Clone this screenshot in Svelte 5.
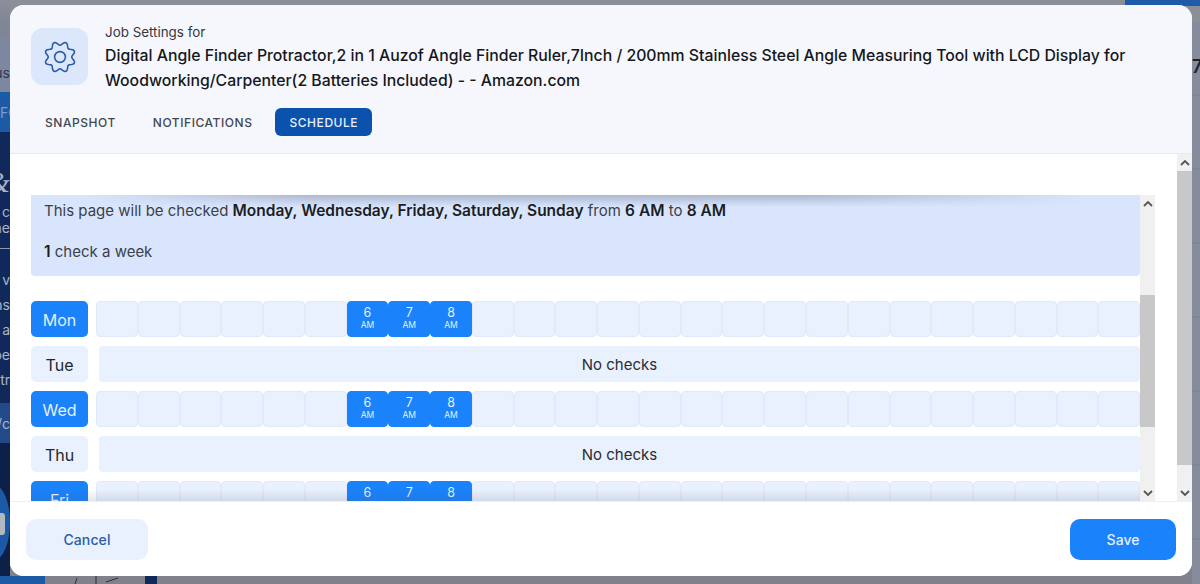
<script>
  const tabs = ['SNAPSHOT', 'NOTIFICATIONS', 'SCHEDULE'];
  let active = $state('SCHEDULE');

  const hours = Array.from({ length: 25 }, (_, i) => i);
  const days = [
    { name: 'Mon', on: true },
    { name: 'Tue', on: false },
    { name: 'Wed', on: true },
    { name: 'Thu', on: false },
    { name: 'Fri', on: true }
  ];
  const picked = [6, 7, 8];

  // eight-lobed cog outline, r swings between the teeth
  const cog = Array.from({ length: 96 }, (_, i) => {
    const a = (i / 96) * Math.PI * 2 + Math.PI / 8;
    const r = 13.6 + 1.9 * Math.cos(a * 8 - Math.PI);
    return `${(16 + r * Math.cos(a)).toFixed(2)} ${(16 + r * Math.sin(a)).toFixed(2)}`;
  });
  const cogPath = 'M' + cog.join('L') + 'Z';
</script>

<div class="page">
  <div class="backdrop">
    <div class="top-blue"></div>
    <div class="left">
      <div class="band b0"></div>
      <div class="band b1"><span>us</span></div>
      <div class="band b2"><span>FO</span></div>
      <div class="band b3">
        <span class="amp">&amp;</span>
        <span class="s1">n c</span>
        <span class="s2">me</span>
        <i class="rule"></i>
        <span class="s3">e v</span>
        <span class="s4">ns</span>
        <span class="s4">t a</span>
        <span class="s4">oe</span>
        <span class="s4">tr</span>
      </div>
      <div class="band b4"><span>y/c</span></div>
      <div class="band b5">
        <i class="head"></i>
        <i class="face"></i>
      </div>
    </div>
    <div class="right">
      <span>7</span>
    </div>
    <div class="bottom">
      <i class="foot-blue"></i>
      <svg width="100" height="8" viewBox="0 0 100 8" fill="none" stroke="#2a2d3a" stroke-width="1">
        <circle cx="-10" cy="8" r="4" fill="#b9bbc2" stroke="none" />
        <path d="M30 8l2-6M51 0v8M61 6l12-4" />
      </svg>
      <i class="foot-navy"></i>
    </div>
  </div>

  <div class="modal">
    <header>
      <div class="top">
        <div class="icon">
          <svg width="32" height="32" viewBox="0 0 32 32" fill="none" stroke="#2a5da8" stroke-width="1.6" stroke-linejoin="round">
            <path d={cogPath} />
            <circle cx="16" cy="16" r="5.4" />
          </svg>
        </div>
        <div class="heading">
          <div class="sub">Job Settings for</div>
          <h1>Digital Angle Finder Protractor,2 in 1 Auzof Angle Finder Ruler,7Inch / 200mm Stainless Steel Angle Measuring Tool with LCD Display for Woodworking/Carpenter(2 Batteries Included) - - Amazon.com</h1>
        </div>
      </div>
      <nav>
        {#each tabs as tab}
          <button type="button" class:active={active === tab} onclick={() => (active = tab)}>{tab}</button>
        {/each}
      </nav>
    </header>

    <div class="body">
      <div class="main">
        <div class="scroller">
          <div class="content">
            <div class="summary">
              <p>This page will be checked <b>Monday, Wednesday, Friday, Saturday, Sunday</b> from <b>6 AM</b> to <b>8 AM</b></p>
              <p><b>1</b> check a week</p>
            </div>
            <div class="rows">
              {#each days as day}
                <div class="row">
                  <div class="day" class:on={day.on}>{day.name}</div>
                  {#if day.on}
                    <div class="cells">
                      {#each hours as h}
                        <div class="cell" class:on={picked.includes(h)}>
                          {#if picked.includes(h)}
                            <span class="num">{h}</span>
                            <span class="ampm">AM</span>
                          {/if}
                        </div>
                      {/each}
                    </div>
                  {:else}
                    <div class="none">No checks</div>
                  {/if}
                </div>
              {/each}
            </div>
          </div>
          <div class="bar inner">
            <div class="arrow"><svg width="10" height="6" viewBox="0 0 10 6"><path d="M1 5l4-4 4 4" fill="none" stroke="#555" stroke-width="1.8" /></svg></div>
            <div class="gap g1"></div>
            <div class="thumb t1"></div>
            <div class="gap g2"></div>
            <div class="arrow"><svg width="10" height="6" viewBox="0 0 10 6"><path d="M1 1l4 4 4-4" fill="none" stroke="#555" stroke-width="1.8" /></svg></div>
          </div>
          <div class="shade top-shade"></div>
          <div class="shade bottom-shade"></div>
        </div>
      </div>
      <div class="bar outer">
        <div class="arrow"><svg width="10" height="6" viewBox="0 0 10 6"><path d="M1 5l4-4 4 4" fill="none" stroke="#555" stroke-width="1.8" /></svg></div>
        <div class="thumb t2"></div>
        <div class="gap g3"></div>
        <div class="arrow"><svg width="10" height="6" viewBox="0 0 10 6"><path d="M1 1l4 4 4-4" fill="none" stroke="#555" stroke-width="1.8" /></svg></div>
      </div>
    </div>

    <footer>
      <button type="button" class="cancel">Cancel</button>
      <button type="button" class="save">Save</button>
    </footer>
  </div>
</div>

<style>
  :global(body) {
    margin: 0;
    overflow: hidden;
    font-family: Inter, "Noto Sans", sans-serif;
  }

  .page {
    position: relative;
    width: 1200px;
    height: 584px;
    box-sizing: border-box;
    padding: 5px 8px 8px 10px;
    overflow: hidden;
    background: linear-gradient(#8b8f98 0, #8b8f98 30px, #80818b 30px);
  }

  /* dimmed page behind the modal */
  .backdrop {
    position: absolute;
    inset: 0;
    overflow: hidden;
  }
  .top-blue {
    position: absolute;
    top: 0;
    right: 0;
    width: 75px;
    height: 6px;
    background: #1f5ba8;
  }
  .left {
    position: absolute;
    left: 0;
    top: 0;
    width: 10px;
    height: 584px;
    display: flex;
    flex-direction: column;
    color: #cfd5e2;
    font-size: 14px;
  }
  .band {
    display: flex;
    flex-direction: column;
    align-items: flex-end;
    overflow: hidden;
    white-space: nowrap;
    position: relative;
  }
  .b0 { height: 37px; background: linear-gradient(#8c8f98, #7f8796 60%, #7f8596); }
  .b1 { height: 55px; background: #7d879f; justify-content: center; color: #2b3a55; padding-top: 16px; box-sizing: border-box; }
  .b2 { height: 40px; background: #1d5aa6; justify-content: center; align-items: flex-start; color: #7f9ccb; }
  .b3 { height: 271px; background: #10295a; padding-top: 30px; box-sizing: border-box; color: #a9b3c9; }
  .b4 { height: 40px; background: #234a88; justify-content: center; color: #a9b5cf; }
  .b5 { flex: 1; background: #0d2047; }
  .amp { font-family: "Liberation Serif", serif; font-style: italic; font-size: 30px; line-height: 40px; }
  .s1 { line-height: 16px; margin-top: 2px; }
  .s2 { line-height: 16px; }
  .rule { width: 10px; height: 1px; background: #8d98b3; margin: 12px 0 18px; flex: none; }
  .s3, .s4 { line-height: 25px; }
  .head {
    position: absolute;
    left: -22px;
    top: 42px;
    width: 32px;
    height: 75px;
    border-radius: 50%;
    background: #1d5aa6;
  }
  .face {
    position: absolute;
    left: -6px;
    top: 70px;
    width: 11px;
    height: 22px;
    border-radius: 3px;
    background: #b4b8c0;
  }
  .right {
    position: absolute;
    left: 1192px;
    top: 22px;
    width: 8px;
    height: 562px;
    background: repeating-linear-gradient(#868c9b 0, #868c9b 72px, #7f8695 72px, #7f8695 74px);
    color: #1d2230;
    font-size: 18px;
    font-weight: 600;
    line-height: 90px;
  }
  .bottom {
    position: absolute;
    left: 0;
    top: 576px;
    width: 100%;
    height: 8px;
    display: flex;
  }
  .foot-blue { width: 45px; background: #1d5aa6; }
  .bottom svg { flex: none; }
  .foot-navy { width: 12px; background: #10295a; }

  .modal {
    position: relative;
    height: 571px;
    display: flex;
    flex-direction: column;
    background: #fff;
    border-radius: 14px;
    overflow: hidden;
  }

  header {
    height: 149px;
    flex: none;
    box-sizing: border-box;
    padding: 17px 21px 0;
    background: #f5f7fc;
    border-bottom: 1px solid #e6e9f0;
  }
  .top {
    display: flex;
    gap: 17px;
  }
  .icon {
    width: 57px;
    height: 57px;
    margin-top: 6px;
    flex: none;
    display: flex;
    align-items: center;
    justify-content: center;
    background: #dce7fb;
    border-radius: 12px;
  }
  .sub {
    font-size: 13.4px;
    line-height: 20px;
    color: #34373f;
  }
  h1 {
    margin: 1px 0 1px;
    font-size: 15.8px;
    line-height: 25px;
    font-weight: 500;
    color: #15171c;
  }
  nav {
    display: flex;
    margin-top: 14px;
  }
  nav button {
    height: 28px;
    padding: 0 14px;
    margin-right: 9px;
    border: 0;
    border-radius: 6px;
    background: none;
    font: 500 12px Inter, sans-serif;
    letter-spacing: 0.55px;
    color: #44474f;
  }
  nav button.active {
    background: #0b52ad;
    color: #e8f0fd;
  }

  .body {
    flex: 1;
    min-height: 0;
    display: flex;
  }
  .main {
    flex: 1;
    min-width: 0;
    padding: 41px 22px 0 21px;
  }
  .scroller {
    position: relative;
    height: 100%;
    display: flex;
    overflow: hidden;
  }
  .content {
    flex: 1;
    min-width: 0;
  }
  .summary {
    height: 81px;
    box-sizing: border-box;
    padding: 5px 13px 0;
    background: #d9e5fc;
    border-radius: 0 0 4px 4px;
    font-size: 15px;
    line-height: 22px;
    color: #3b3f49;
  }
  .summary p {
    margin: 0 0 19px;
  }
  .summary b {
    font-size: 15.5px;
    font-weight: 600;
    color: #1b1d23;
  }
  .rows {
    display: flex;
    flex-direction: column;
    gap: 9px;
    margin-top: 25px;
  }
  .row {
    display: flex;
    height: 36px;
    gap: 8px;
    flex: none;
  }
  .day {
    width: 57px;
    flex: none;
    box-sizing: border-box;
    padding-top: 1px;
    display: flex;
    align-items: center;
    justify-content: center;
    background: #e9f1fe;
    border-radius: 5px;
    font-size: 16px;
    color: #24262c;
  }
  .day.on {
    background: #1a82fb;
    color: #e4efff;
  }
  .cells {
    flex: 1;
    display: flex;
  }
  .cell {
    flex: 1;
    box-sizing: border-box;
    padding-bottom: 1px;
    display: flex;
    flex-direction: column;
    align-items: center;
    justify-content: center;
    background: #e9f1fe;
    border: 1px solid #e2e9f8;
    border-radius: 4px;
    color: #e4efff;
  }
  .cell.on {
    background: #1a82fb;
    border-color: #1a82fb;
  }
  .num {
    font-size: 12.5px;
    line-height: 14px;
  }
  .ampm {
    font-size: 8.5px;
    line-height: 11px;
  }
  .none {
    flex: 1;
    margin-left: 3px;
    padding-top: 1px;
    display: flex;
    align-items: center;
    justify-content: center;
    background: #e9f1fe;
    border-radius: 4px;
    font-size: 15px;
    color: #2a2c33;
  }

  .bar {
    width: 15px;
    flex: none;
    display: flex;
    flex-direction: column;
    background: #f0f0f0;
  }
  .arrow {
    height: 17px;
    flex: none;
    display: flex;
    align-items: center;
    justify-content: center;
    background: #f0f0f0;
  }
  .thumb { background: #c8c8c8; }
  .gap { min-height: 0; }
  .g1 { height: 83px; }
  .t1 { height: 132px; }
  .g2 { flex: 1; }
  .t2 { height: 294px; }
  .g3 { flex: 1; }

  .shade {
    position: absolute;
    left: 0;
    right: 15px;
    pointer-events: none;
  }
  .top-shade {
    top: 0;
    height: 12px;
    background: linear-gradient(rgba(70, 80, 110, 0.3), rgba(70, 80, 110, 0));
    mask-image: linear-gradient(90deg, transparent 5%, #000 25%, #000 70%, transparent 95%);
  }
  .bottom-shade {
    bottom: 0;
    height: 12px;
    background: linear-gradient(rgba(70, 80, 110, 0), rgba(70, 80, 110, 0.14));
  }

  footer {
    height: 75px;
    flex: none;
    box-sizing: border-box;
    display: flex;
    justify-content: space-between;
    padding: 17px 16px 16px;
    background: #fff;
    border-top: 1px solid #eef0f4;
  }
  footer button {
    height: 41px;
    border: 0;
    border-radius: 10px;
    font: 500 14px Inter, sans-serif;
  }
  .cancel {
    width: 122px;
    background: #e9f1fe;
    color: #2a5da8;
    letter-spacing: 0.1px;
  }
  .save {
    width: 106px;
    background: #1a82fb;
    color: #e4efff;
  }
</style>
